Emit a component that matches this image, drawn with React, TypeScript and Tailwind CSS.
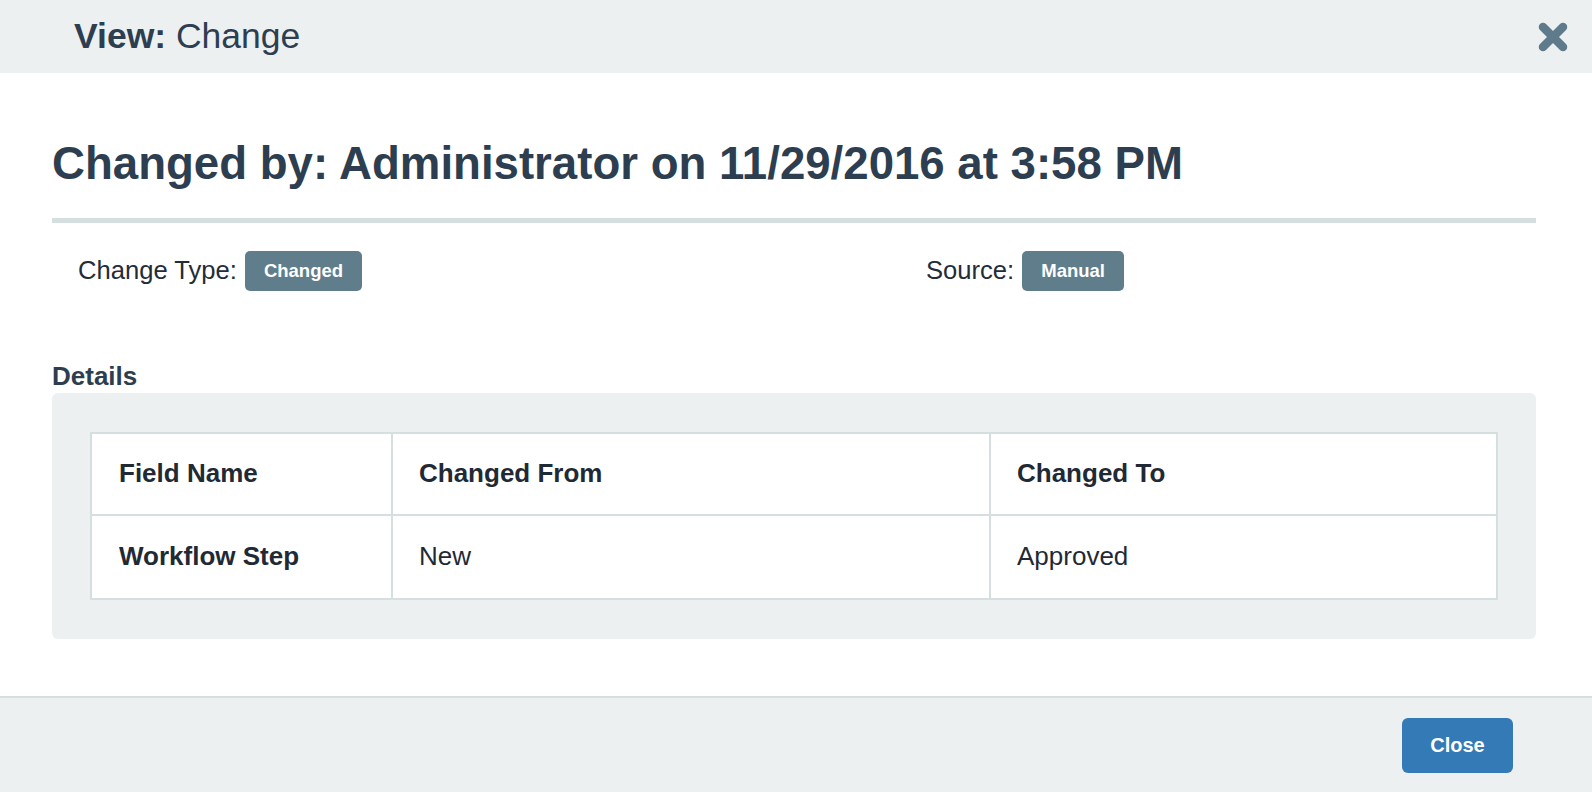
import React from 'react';

const rows = [{ field: 'Workflow Step', from: 'New', to: 'Approved' }];

function CloseIcon() {
  return (
    <svg width="30" height="30" viewBox="0 0 30 30" aria-hidden="true">
      <path d="M5 5 L25 25 M25 5 L5 25" stroke="#5f7a8a" strokeWidth="8.5" strokeLinecap="round" fill="none" />
    </svg>
  );
}

function Badge({ children }: { children: React.ReactNode }) {
  return (
    <span className="inline-flex h-[40px] items-center rounded-[5px] bg-[#607d8b] px-[19px] text-[18.5px] font-bold text-white">
      {children}
    </span>
  );
}

export default function App() {
  return (
    <div
      className="flex h-[792px] w-[1592px] flex-col bg-white text-[#2c3e50]"
      style={{ fontFamily: '"Liberation Sans", Arial, sans-serif' }}
    >
      <div className="flex h-[73px] shrink-0 items-center justify-between bg-[#ecf0f1] pl-[74px] pr-[24px]">
        <div className="text-[35.5px] leading-none">
          <span className="font-bold">View:</span> Change
        </div>
        <button className="flex h-[30px] w-[30px] items-center justify-center">
          <CloseIcon />
        </button>
      </div>

      <div className="flex-1 pl-[52px] pr-[56px] pt-[68px]">
        <h1 className="text-[45.6px] font-bold leading-none">Changed by: Administrator on 11/29/2016 at 3:58 PM</h1>
        <div className="mt-[31px] h-[5px] bg-[#d5dfe0]" />

        <div className="mt-[28px] flex items-center text-[25.6px] text-[#222d38]">
          <div className="flex w-[874px] items-center gap-[8px] pl-[26px]">
            <span>Change Type:</span>
            <Badge>Changed</Badge>
          </div>
          <div className="flex items-center gap-[8px]">
            <span>Source:</span>
            <Badge>Manual</Badge>
          </div>
        </div>

        <div className="mt-[72px] text-[26px] font-bold leading-none">Details</div>

        <div className="mt-[4px] rounded-[6px] bg-[#ecf0f1] px-[38px] py-[39px]">
          <table className="w-full border-collapse bg-white text-[26px] text-[#1f2a35]">
            <thead>
              <tr className="h-[82px]">
                <th className="w-[301px] border-2 border-[#d5dfe0] pl-[27px] text-left font-bold">Field Name</th>
                <th className="w-[598px] border-2 border-[#d5dfe0] pl-[26px] text-left font-bold">Changed From</th>
                <th className="border-2 border-[#d5dfe0] pl-[26px] text-left font-bold">Changed To</th>
              </tr>
            </thead>
            <tbody>
              {rows.map((r) => (
                <tr key={r.field} className="h-[84px]">
                  <td className="border-2 border-[#d5dfe0] pl-[27px] font-bold">{r.field}</td>
                  <td className="border-2 border-[#d5dfe0] pl-[26px]">{r.from}</td>
                  <td className="border-2 border-[#d5dfe0] pl-[26px]">{r.to}</td>
                </tr>
              ))}
            </tbody>
          </table>
        </div>
      </div>

      <div className="flex h-[96px] shrink-0 items-center justify-end border-t-2 border-[#d5dfe0] bg-[#ecf0f1] pr-[79px]">
        <button className="h-[55px] w-[111px] rounded-[6px] bg-[#337ab7] text-[20px] font-bold text-white">
          Close
        </button>
      </div>
    </div>
  );
}
